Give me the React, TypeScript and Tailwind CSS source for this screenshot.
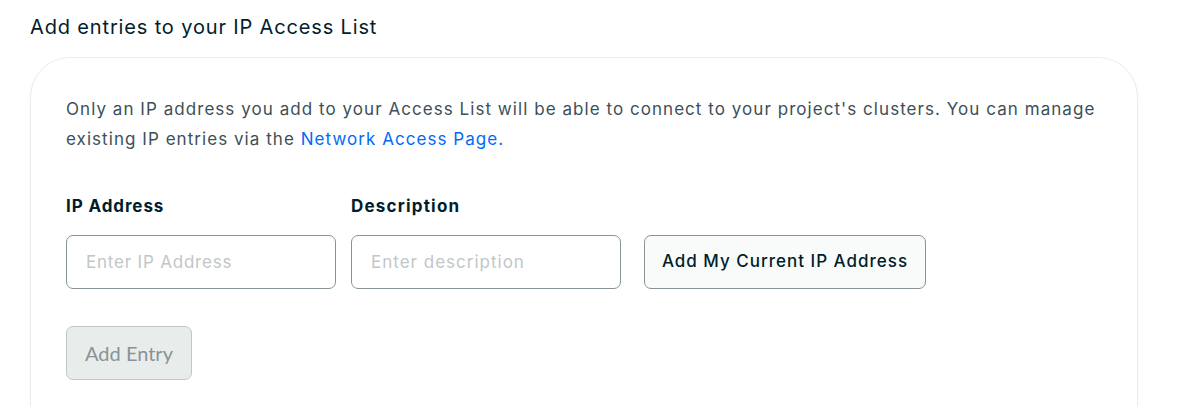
import React from 'react';

const euclid = { fontFamily: '"Inter", "Noto Sans", sans-serif' };

export default function App() {
  return (
    <div className="w-[1203px] h-[406px] overflow-hidden bg-white text-[#001e2b]" style={euclid}>
      <div className="pl-[30px] pr-[65px] pt-[12px]">
        <h2 className="text-[20px] leading-[30px] font-normal tracking-[0.85px]">Add entries to your IP Access List</h2>

        <div className="mt-[15px] rounded-[40px] border border-[#e8edeb] shadow-[0_4px_10px_-4px_rgba(0,30,43,0.08)] px-[35px] pt-[36px] pb-[40px] h-[400px]">
          <p className="text-[17px] leading-[30px] text-[#3d4f58] tracking-[1.05px] whitespace-nowrap">
            Only an IP address you add to your Access List will be able to connect to your project's clusters. You can manage
            <br />
            existing IP entries via the <a className="text-[#016bf8]">Network Access Page.</a>
          </p>

          <div className="mt-[42px] flex items-end">
            <div className="flex flex-col">
              <label className="text-[17px] leading-[20px] font-bold tracking-[0.9px]">IP Address</label>
              <input
                placeholder="Enter IP Address"
                className="mt-[19px] w-[270px] h-[54px] rounded-[7px] border border-[#889397] px-[19px] text-[17px] tracking-[0.8px] placeholder-[#c1c7c6] outline-none"
              />
            </div>
            <div className="ml-[15px] flex flex-col">
              <label className="text-[17px] leading-[20px] font-bold tracking-[1.2px]">Description</label>
              <input
                placeholder="Enter description"
                className="mt-[19px] w-[270px] h-[54px] rounded-[7px] border border-[#889397] px-[19px] text-[17px] tracking-[1px] placeholder-[#c1c7c6] outline-none"
              />
            </div>
            <button className="ml-[23px] h-[54px] w-[282px] rounded-[7px] border border-[#889397] bg-[#f9fbfa] text-[17px] tracking-[1px] text-[#001e2b] font-medium">
              Add My Current IP Address
            </button>
          </div>

          <button
            className="mt-[37px] h-[54px] w-[126px] rounded-[7px] border border-[#c1c7c6] bg-[#e8edeb] text-[20px] text-[#889397]"
            style={{ fontFamily: '"Lato", sans-serif' }}
          >
            Add Entry
          </button>
        </div>
      </div>
    </div>
  );
}
